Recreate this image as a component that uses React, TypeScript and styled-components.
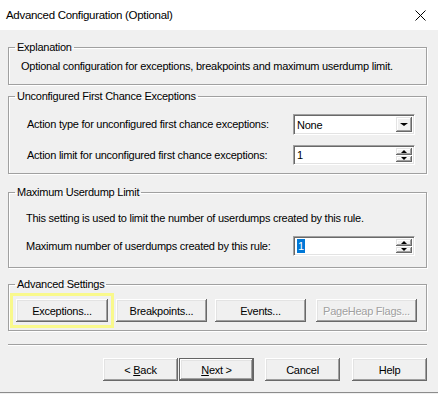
import React from 'react'
import styled, { createGlobalStyle } from 'styled-components'

const GlobalStyle = createGlobalStyle`
  html, body {
    margin: 0;
    padding: 0;
    background: #f0f0f0;
  }
  body {
    font-family: "Liberation Sans", Arial, sans-serif;
    font-size: 11px;
    letter-spacing: -0.25px;
    color: #000;
  }
`

// Window
const StWindow = styled.div`
  width: 438px;
  height: 394px;
  display: flex;
  flex-direction: column;
  background: #f0f0f0;
  overflow: hidden;
`

// Title bar
const StTitleBar = styled.div`
  height: 30px;
  flex: none;
  background: #fff;
  display: flex;
  align-items: center;
  justify-content: space-between;
  padding: 0 12px 0 6px;
`
const StTitle = styled.span`
  font-family: "Liberation Sans", Arial, sans-serif;
  font-size: 11.5px;
  letter-spacing: -0.3px;
  color: #000;
`

// Body
const StBody = styled.div`
  flex: 1;
  display: flex;
  flex-direction: column;
  padding: 11px 11px 0 8px;
`

// Group box
const StGroup = styled.fieldset<{ $mt?: number }>`
  margin: ${p => p.$mt ?? 0}px 0 0 0;
  padding: 0;
  min-width: 0;
  border: 1px solid #a0a0a0;
  box-shadow: inset 1px 1px 0 #fff, 1px 1px 0 #fff;
`
const StLegend = styled.legend`
  margin-left: 6px;
  padding: 0 2px;
  line-height: 13px;
  font-size: 11px;
`
const StGroupBody = styled.div<{ $pad: string }>`
  padding: ${p => p.$pad};
  display: flex;
  flex-direction: column;
`
const StText = styled.div`
  line-height: 13px;
  white-space: nowrap;
`
const StRow = styled.div<{ $mt?: number }>`
  display: flex;
  align-items: center;
  justify-content: space-between;
  margin-top: ${p => p.$mt ?? 0}px;
`

// Inputs
const StField = styled.div<{ $h: number }>`
  width: 122px;
  height: ${p => p.$h}px;
  box-sizing: border-box;
  background: #fff;
  border-top: 1px solid #a0a0a0;
  border-left: 1px solid #a0a0a0;
  border-right: 1px solid #fff;
  border-bottom: 1px solid #fff;
  box-shadow: inset 1px 1px 0 #696969, inset -1px -1px 0 #e3e3e3;
  display: flex;
  align-items: stretch;
  padding: 2px;
`
const StValue = styled.div`
  flex: 1;
  display: flex;
  align-items: center;
  padding-left: 1px;
  font-size: 11px;
`
const StSelected = styled.span`
  background: #0078d7;
  color: #fff;
  line-height: 14px;
  padding: 0 1px;
`
const StArrowBtn = styled.div`
  width: 16px;
  box-sizing: border-box;
  background: #f0f0f0;
  box-shadow: inset -1px -1px 0 #696969, inset 1px 1px 0 #e3e3e3, inset -2px -2px 0 #a0a0a0, inset 2px 2px 0 #fff;
  display: flex;
  align-items: center;
  justify-content: center;
`
const StSpin = styled.div`
  width: 16px;
  display: flex;
  flex-direction: column;
  gap: 1px;
`
const StSpinBtn = styled(StArrowBtn)`
  flex: 1;
  width: 16px;
`
const StTri = styled.span<{ $up?: boolean; $size: number }>`
  width: 0;
  height: 0;
  border-left: ${p => p.$size}px solid transparent;
  border-right: ${p => p.$size}px solid transparent;
  ${p => (p.$up ? 'border-bottom' : 'border-top')}: ${p => Math.ceil(p.$size * 0.7)}px solid #000;
`

// Buttons
const StButton = styled.button<{ $w: number; $default?: boolean; $disabled?: boolean; $focus?: boolean }>`
  width: ${p => p.$w}px;
  height: 23px;
  box-sizing: border-box;
  padding: 0;
  margin: 0;
  font-family: "Liberation Sans", Arial, sans-serif;
  font-size: 11px;
  letter-spacing: -0.25px;
  color: ${p => (p.$disabled ? '#a0a0a0' : '#000')};
  background: #f0f0f0;
  border: ${p => (p.$default ? '1px solid #646464' : 'none')};
  box-shadow: inset -1px -1px 0 #696969, inset 1px 1px 0 #fff, inset -2px -2px 0 #a0a0a0, inset 2px 2px 0 #e3e3e3;
  ${p => (p.$focus ? 'outline: 3px solid #f9f98c; outline-offset: 3px;' : '')}
  ${p => (p.$disabled ? 'text-shadow: 1px 1px 0 #fff;' : '')}
`
const StButtonRow = styled.div`
  display: flex;
  gap: 8px;
`
const StU = styled.span`
  text-decoration: underline;
  text-underline-offset: 1px;
`

// Footer
const StSeparator = styled.div`
  margin-top: 13px;
  height: 1px;
  background: #a0a0a0;
  box-shadow: 0 1px 0 #fff;
`
const StFooter = styled.div`
  margin-top: 13px;
  display: flex;
  justify-content: flex-end;
`
const StGap = styled.div<{ $w: number }>`
  width: ${p => p.$w}px;
`
const StBottomEdge = styled.div`
  margin: auto -11px 1px -8px;
  height: 1px;
  background: #8c8c8c;
`

const CloseIcon = () => (
  <svg width="11" height="11" viewBox="0 0 11 11">
    <path d="M0.5 0.5 L10.5 10.5 M10.5 0.5 L0.5 10.5" stroke="#000" strokeWidth="1" fill="none" />
  </svg>
)

const Spinner = () => (
  <StSpin>
    <StSpinBtn><StTri $up $size={3} /></StSpinBtn>
    <StSpinBtn><StTri $size={3} /></StSpinBtn>
  </StSpin>
)

const App = () => {
  return (
    <StWindow>
      <GlobalStyle />
      <StTitleBar>
        <StTitle>Advanced Configuration (Optional)</StTitle>
        <CloseIcon />
      </StTitleBar>

      <StBody>
        {/* Explanation */}
        <StGroup>
          <StLegend>Explanation</StLegend>
          <StGroupBody $pad="6px 8px 11px 12px">
            <StText>Optional configuration for exceptions, breakpoints and maximum userdump limit.</StText>
          </StGroupBody>
        </StGroup>

        {/* Unconfigured First Chance Exceptions */}
        <StGroup $mt={5}>
          <StLegend>Unconfigured First Chance Exceptions</StLegend>
          <StGroupBody $pad="11px 11px 8px 18px">
            <StRow>
              <StText>Action type for unconfigured first chance exceptions:</StText>
              <StField $h={21}>
                <StValue>None</StValue>
                <StArrowBtn><StTri $size={4} /></StArrowBtn>
              </StField>
            </StRow>
            <StRow $mt={10}>
              <StText>Action limit for unconfigured first chance exceptions:</StText>
              <StField $h={20}>
                <StValue>1</StValue>
                <Spinner />
              </StField>
            </StRow>
          </StGroupBody>
        </StGroup>

        {/* Maximum Userdump Limit */}
        <StGroup $mt={12}>
          <StLegend>Maximum Userdump Limit</StLegend>
          <StGroupBody $pad="13px 11px 11px 17px">
            <StText>This setting is used to limit the number of userdumps created by this rule.</StText>
            <StRow $mt={11}>
              <StText>Maximum number of userdumps created by this rule:</StText>
              <StField $h={20}>
                <StValue><StSelected>1</StSelected></StValue>
                <Spinner />
              </StField>
            </StRow>
          </StGroupBody>
        </StGroup>

        {/* Advanced Settings */}
        <StGroup $mt={10}>
          <StLegend>Advanced Settings</StLegend>
          <StGroupBody $pad="8px 9px 8px 7px">
            <StButtonRow>
              <StButton $w={92} $focus>Exceptions...</StButton>
              <StButton $w={91}>Breakpoints...</StButton>
              <StButton $w={91}>Events...</StButton>
              <StButton $w={101} $disabled style={{ marginLeft: 2 }}>PageHeap Flags...</StButton>
            </StButtonRow>
          </StGroupBody>
        </StGroup>

        <StSeparator />

        <StFooter>
          <StButton $w={75}>&lt; <StU>B</StU>ack</StButton>
          <StGap $w={1} />
          <StButton $w={75} $default><StU>N</StU>ext &gt;</StButton>
          <StGap $w={11} />
          <StButton $w={75}>Cancel</StButton>
          <StGap $w={12} />
          <StButton $w={75}>Help</StButton>
        </StFooter>

        <StBottomEdge />
      </StBody>
    </StWindow>
  )
}

export default App
